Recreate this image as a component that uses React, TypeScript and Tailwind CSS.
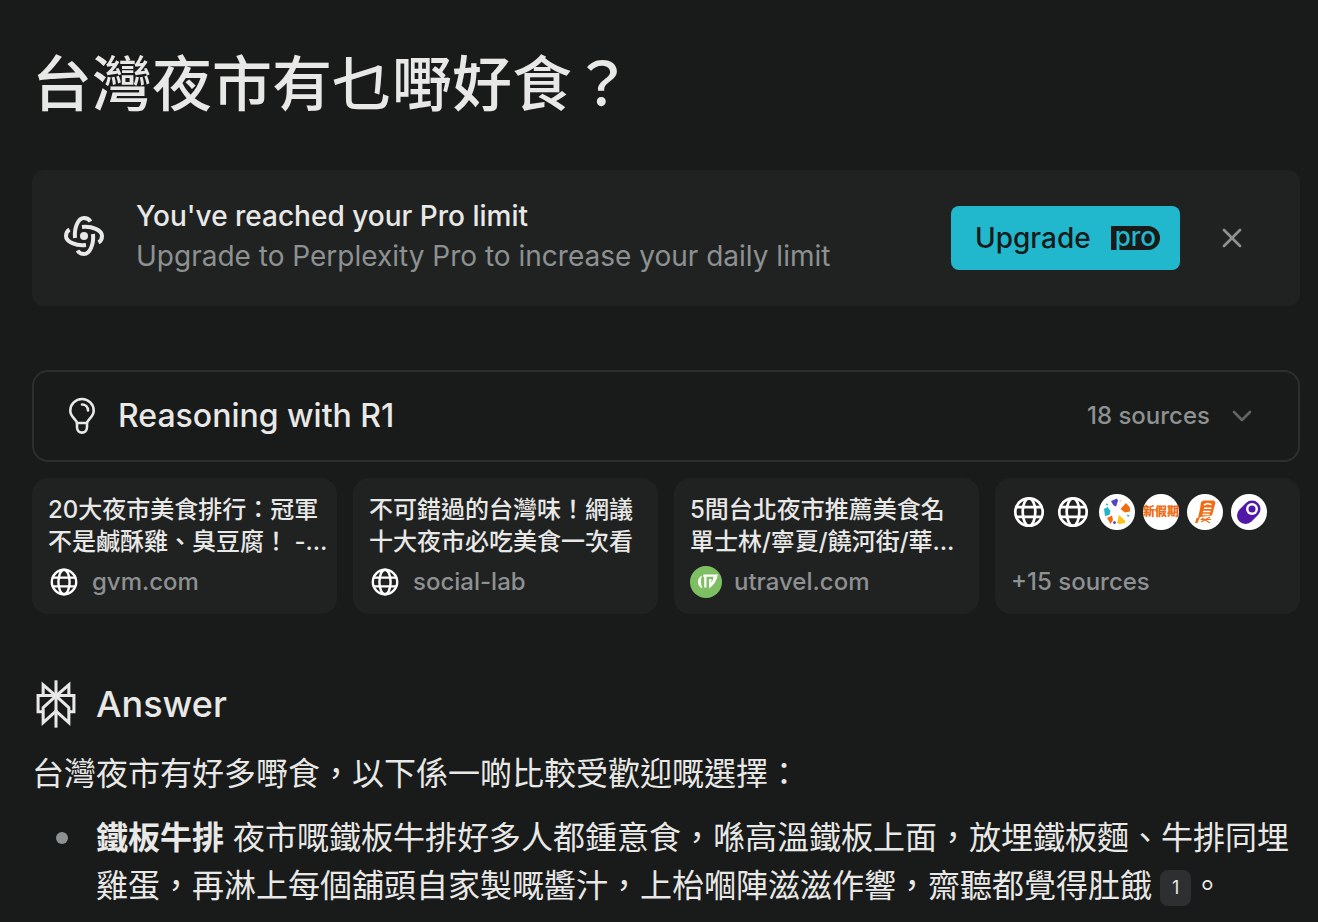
import React from "react";
import { ChevronDown, X } from "lucide-react";

interface Source {
  title: string;
  site: string;
  icon: React.ReactNode;
}

const GlobeIcon = ({ className }: { className: string }) => (
  <svg
    viewBox="0 0 32 32"
    fill="none"
    stroke="#ffffff"
    strokeWidth="2.4"
    className={className}
    aria-hidden="true"
  >
    <circle cx="16" cy="16" r="12.2" />
    <ellipse cx="16" cy="16" rx="5.6" ry="12.2" />
    <path d="M5 11.6H27M5 20.4H27" />
  </svg>
);

const UtravelIcon = () => (
  <svg viewBox="0 0 32 32" className="size-8" aria-hidden="true">
    <circle cx="16" cy="16" r="16" fill="#7fbf63" />
    <path d="M12 9.500C6.500 12 6.500 20 12.500 22.500C10.500 18.500 10.500 13.500 12 9.500Z" fill="#ffffff" />
    <path d="M13.500 8.500H28L27.200 10.800H16.500V21.500H14.200V10.800H13Z" fill="#ffffff" />
    <path d="M23.500 10.500H27.500C26 15.500 23.500 19.500 19 22.500V13H21.500V17Q23 14 23.500 10.500Z" fill="#ffffff" />
  </svg>
);

// 渦巻き状の4本の腕と中央の点
const ProIcon = () => (
  <svg viewBox="-20 -20 40 40" className="size-10 shrink-0" aria-hidden="true">
    <circle r="4" fill="#e8e8e6" />
    {[0, 90, 180, 270].map((angle) => (
      <path
        key={angle}
        d="M-9 2C-10 -8 -6 -18 0 -18C3 -18 5 -17 6.500 -14.500"
        fill="none"
        stroke="#e8e8e6"
        strokeWidth="4"
        transform={`rotate(${angle})`}
      />
    ))}
  </svg>
);

const BulbIcon = () => (
  <svg
    viewBox="-2 0 32 38"
    fill="none"
    stroke="#e8e8e6"
    strokeWidth="2.6"
    strokeLinejoin="round"
    strokeLinecap="round"
    className="h-[38px] w-8 shrink-0"
    aria-hidden="true"
  >
    <path d="M9 26C8.500 22.500 2.300 20 2.300 13.700A11.700 11.700 0 0 1 25.700 13.700C25.700 20 19.500 22.500 19 26Z" />
    <path d="M9 26V30C9 37.500 19 37.500 19 30V26" />
    <path d="M14 7.500C17.500 7.500 20 10 20 13.500" />
  </svg>
);

const AnswerIcon = () => (
  <svg
    viewBox="52 32 114 142"
    fill="none"
    stroke="#e8e8e6"
    strokeWidth="9"
    className="h-12 w-10 shrink-0"
    aria-hidden="true"
  >
    <path d="M109 33V173" />
    <path d="M71 78V46L109 79L147 46V78" />
    <path d="M71 126H56V78H162V126H147" />
    <path d="M109 79L71 114V158L109 124L147 158V114L109 79" />
  </svg>
);

const FlowerIcon = () => (
  <svg viewBox="0 0 36 36" className="size-9" aria-hidden="true">
    <circle cx="18" cy="18" r="18" fill="#ffffff" />
    <path d="M12 7L18 4.500L19 7L17 12.500Q14 12 12 7Z" fill="#5046c8" />
    <path d="M20 7L22.500 5L22 8Z" fill="#f8c79a" />
    <path d="M21.500 15L27 9L31 13.500V17.500L26 18.500Z" fill="#f26c14" />
    <path d="M5 15L8.500 13L11.500 17L10.500 21L6 22Z" fill="#22b5c8" />
    <path d="M8 24L13 21.500L14 26L11.500 30Z" fill="#f26c14" />
    <path d="M20 21L26 26.500V29L20.500 30L18 29Z" fill="#fbc317" />
    <path d="M27.500 20.500L31 21.500L29 23Z" fill="#22b5c8" />
    <circle cx="15.500" cy="28.500" r="1.500" fill="#6a4bc4" />
    <circle cx="8" cy="10.500" r="1" fill="#22b5c8" />
  </svg>
);

const HolidayIcon = () => (
  <span className="flex size-9 items-center justify-center rounded-full bg-white text-[12px] leading-none font-black whitespace-nowrap text-[#f26c14]">
    新假期
  </span>
);

const BookIcon = () => (
  <svg viewBox="0 0 36 36" className="size-9" aria-hidden="true">
    <circle cx="18" cy="18" r="18" fill="#ffffff" />
    <path d="M14 8L16.500 6.500H27L28.500 8.500L25 21.500L13 23L10.500 29H8L9.500 24H11L13 15Z" fill="#f26c14" />
    <path
      d="M17 11L20 9.500L24.500 10.500M17 14.200H24.500M16 17.500H23.500M15.500 20.500H22.500"
      stroke="#ffffff"
      strokeWidth="1.5"
      fill="none"
    />
    <path d="M14 28L23 23M15 24L23 29M13.500 25.500H24" stroke="#f26c14" strokeWidth="1.2" fill="none" />
  </svg>
);

const CameraIcon = () => (
  <svg viewBox="0 0 36 36" className="size-9" aria-hidden="true">
    <circle cx="18" cy="18" r="18" fill="#ffffff" />
    <path d="M14.500 21.500L21 15" stroke="#5019a8" strokeWidth="17" strokeLinecap="round" />
    <circle cx="21" cy="15" r="6" fill="#ffffff" />
    <circle cx="21" cy="15" r="3.500" fill="#5019a8" />
  </svg>
);

const sources: Source[] = [
  {
    title: "20大夜市美食排行：冠軍\n不是鹹酥雞、臭豆腐！ -…",
    site: "gvm.com",
    icon: <GlobeIcon className="size-8" />,
  },
  {
    title: "不可錯過的台灣味！網議\n十大夜市必吃美食一次看",
    site: "social-lab",
    icon: <GlobeIcon className="size-8" />,
  },
  {
    title: "5間台北夜市推薦美食名\n單士林/寧夏/饒河街/華…",
    site: "utravel.com",
    icon: <UtravelIcon />,
  },
];

const SourceCard: React.FC<Source> = ({ title, site, icon }) => (
  <a href="#" className="flex flex-col gap-2 rounded-2xl bg-[#202222] py-4 pr-1 pl-4">
    <span className="text-2xl leading-8 font-medium whitespace-pre-line">
      {title}
    </span>
    <span className="flex items-center gap-3 text-2xl leading-8 font-medium text-[#8d9191]">
      {icon}
      {site}
    </span>
  </a>
);

const UpgradeBanner = () => (
  <section className="flex items-start rounded-xl bg-[#202222] pt-[26px] pr-12 pb-[30px] pl-8">
    <div className="flex flex-1 items-center gap-8">
      <ProIcon />
      <div className="text-[28px] leading-10">
        <p className="font-medium">You've reached your Pro limit</p>
        <p className="text-[#8d9191]">
          Upgrade to Perplexity Pro to increase your daily limit
        </p>
      </div>
    </div>
    <div className="flex items-center gap-8 pt-[10px]">
      <button className="flex h-16 items-center gap-5 rounded-lg bg-[#21b8cd] pr-5 pl-6 text-[28px] font-medium text-[#191a1a]">
        Upgrade
        <span className="flex h-6 items-center justify-center rounded-l-xs rounded-r-full bg-[#191a1a] px-1 pb-0.5 text-[26px] leading-8 text-[#21b8cd]">
          pro
        </span>
      </button>
      <button aria-label="Close" className="p-1">
        <X className="size-8 text-[#8d9191]" strokeWidth={2} />
      </button>
    </div>
  </section>
);

export default function App() {
  return (
    <main
      lang="zh-Hant"
      className="min-h-screen bg-[#191a1a] pt-11 pr-[18px] pl-8 font-['Inter','Noto_Sans_CJK_TC',sans-serif] text-[#e8e8e6]"
    >
      <h1 className="text-[60px] leading-20 font-medium">
        台灣夜市有乜嘢好食？
      </h1>

      <div className="mt-[46px]">
        <UpgradeBanner />
      </div>

      <button className="mt-16 flex w-full items-center rounded-2xl border-2 border-[#2d2f2f] px-8 py-6 text-left">
        <BulbIcon />
        <span className="ml-5 flex-1 text-[32px] leading-10 font-medium">
          Reasoning with R1
        </span>
        <span className="text-2xl font-medium text-[#8d9191]">18 sources</span>
        <ChevronDown className="mr-2 ml-4 size-8 text-[#606464]" />
      </button>

      <div className="mt-4 grid grid-cols-4 gap-4">
        {sources.map((source) => (
          <SourceCard key={source.site} {...source} />
        ))}
        <a
          href="#"
          className="flex flex-col justify-between rounded-2xl bg-[#202222] p-4"
        >
          <span className="flex gap-2">
            <GlobeIcon className="size-9" />
            <GlobeIcon className="size-9" />
            <FlowerIcon />
            <HolidayIcon />
            <BookIcon />
            <CameraIcon />
          </span>
          <span className="text-2xl leading-8 font-medium text-[#8d9191]">
            +15 sources
          </span>
        </a>
      </div>

      <h2 className="mt-16 flex items-center gap-5 pl-1 text-4xl leading-[52px] font-medium">
        <AnswerIcon />
        Answer
      </h2>

      <div className="mt-5 text-[32px] leading-12">
        <p>台灣夜市有好多嘢食，以下係一啲比較受歡迎嘅選擇：</p>
        <ul className="mt-4">
          <li className="flex">
            <span className="mt-[18px] mr-7 ml-6 size-3 shrink-0 rounded-full bg-[#8d9191]" />
            <p>
              <strong className="font-bold">鐵板牛排</strong>{" "}
              夜市嘅鐵板牛排好多人都鍾意食，喺高溫鐵板上面，放埋鐵板麵、牛排同埋雞蛋，再淋上每個舖頭自家製嘅醬汁，上枱嗰陣滋滋作響，齋聽都覺得肚餓
              <a
                href="#"
                className="ml-2 inline-block rounded-lg bg-[#2d2f31] px-3 align-middle text-lg leading-9"
              >
                1
              </a>
              。
            </p>
          </li>
        </ul>
      </div>
    </main>
  );
}
